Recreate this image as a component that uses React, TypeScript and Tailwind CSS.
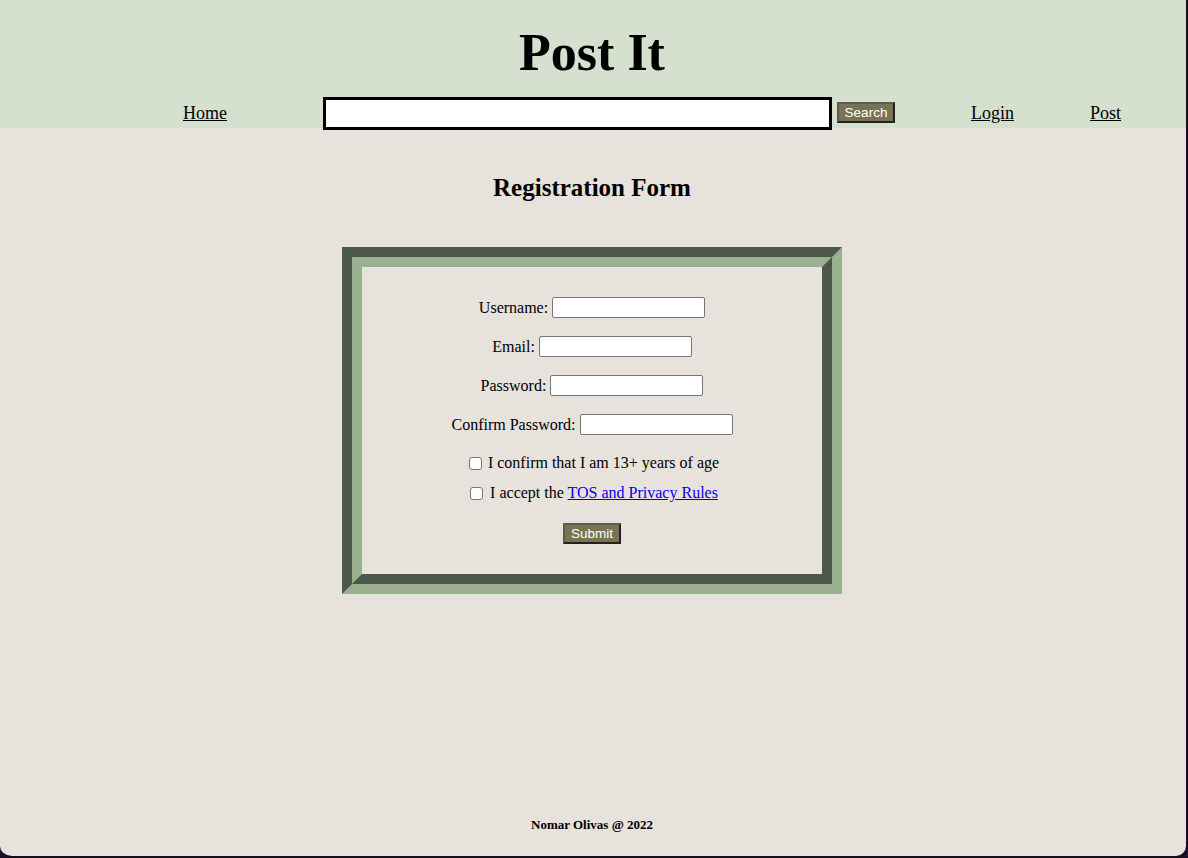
import { useState } from "react";

const serif = "font-['Liberation_Serif','Times_New_Roman',serif]";
const sans = "font-['Liberation_Sans',Arial,sans-serif]";

function Field({ label, type }: { label: string; type: string }) {
  return (
    <div className="flex items-center h-[21px] text-[16px]">
      <label className="mr-[4px] leading-[21px]">{label}</label>
      <input
        type={type}
        className="w-[153px] h-[21px] bg-white border border-[#767676] rounded-[2px] outline-none"
      />
    </div>
  );
}

function OliveButton({ text }: { text: string }) {
  return (
    <button
      className={`${sans} h-[21px] w-[58px] bg-[#7a7352] text-white text-[13.5px] leading-[17px] border-2 border-t-[#5a5a5a] border-l-[#5a5a5a] border-b-[#222] border-r-[#222]`}
    >
      {text}
    </button>
  );
}

export default function App() {
  const [search, setSearch] = useState("");
  const [age, setAge] = useState(false);
  const [tos, setTos] = useState(false);

  const box =
    "appearance-none w-[13px] h-[13px] bg-white border border-[#767676] rounded-[3px] ml-[4px] mr-[3px] checked:bg-[#0075ff]";

  return (
    <div className="w-full h-[858px] bg-[#1a0f28]">
      <div
        className={`${serif} w-[1188px] h-[858px] flex flex-col bg-[#e7e2dc] text-black border-r-2 border-b-2 border-[#170c24] rounded-b-[12px] overflow-hidden`}
      >
        {/* header */}
        <header className="h-[128px] bg-[#d5e0ce] flex flex-col pr-[2px]">
          <h1 className="mt-[25px] h-[56px] leading-[56px] text-[52px] font-bold text-center">
            Post It
          </h1>
          <nav className="mt-[16px] h-[33px] flex items-center text-[18px]">
            <a href="#" className="ml-[183px] underline leading-[21px] mt-[-1px]">
              Home
            </a>
            <input
              value={search}
              onChange={(e) => setSearch(e.target.value)}
              className="ml-[96px] w-[509px] h-[33px] bg-white border-[3px] border-black outline-none"
            />
            <div className="ml-[5px] mt-[-5px]">
              <OliveButton text="Search" />
            </div>
            <a href="#" className="ml-[76px] underline leading-[21px] mt-[-1px]">
              Login
            </a>
            <a href="#" className="ml-[76px] underline leading-[21px] mt-[-1px]">
              Post
            </a>
          </nav>
        </header>

        <main className="flex flex-col items-center pr-[2px]">
          <h2 className="mt-[46px] h-[28px] leading-[28px] text-[25px] font-bold text-center">
            Registration Form
          </h2>

          {/* form frame */}
          <div className="mt-[45px] w-[500px] border-[10px] border-t-[#4d584c] border-l-[#4d584c] border-b-[#9bb090] border-r-[#9bb090]">
            <div className="border-[10px] border-t-[#9bb090] border-l-[#9bb090] border-b-[#4d584c] border-r-[#4d584c]">
              <form
                className="h-[307px] pt-[30px] flex flex-col items-center text-[16px]"
                onSubmit={(e) => e.preventDefault()}
              >
                <Field label="Username:" type="text" />
                <div className="h-[18px]" />
                <Field label="Email:" type="email" />
                <div className="h-[18px]" />
                <Field label="Password:" type="password" />
                <div className="h-[18px]" />
                <Field label="Confirm Password:" type="password" />
                <label className="mt-[18px] h-[20px] flex items-center leading-[20px]">
                  <input
                    type="checkbox"
                    checked={age}
                    onChange={() => setAge(!age)}
                    className={box}
                  />
                  <span className="ml-[3px]">I confirm that I am 13+ years of age</span>
                </label>
                <label className="mt-[10px] h-[20px] flex items-center leading-[20px]">
                  <input
                    type="checkbox"
                    checked={tos}
                    onChange={() => setTos(!tos)}
                    className={box}
                  />
                  <span className="ml-[4px]">
                    I accept the{" "}
                    <a href="#" className="text-[#0000ee] underline">
                      TOS and Privacy Rules
                    </a>
                  </span>
                </label>
                <div className="mt-[18px]">
                  <OliveButton text="Submit" />
                </div>
              </form>
            </div>
          </div>
        </main>

        <div className="flex-1" />
        <footer className="pb-[24px] pr-[2px] text-center text-[13px] leading-[15px] font-bold">
          Nomar Olivas @ 2022
        </footer>
      </div>
    </div>
  );
}
